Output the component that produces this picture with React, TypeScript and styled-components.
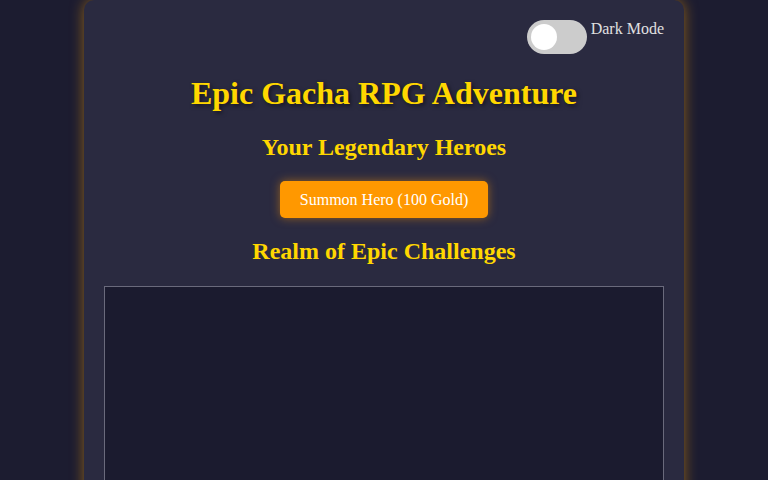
import React, { useState } from "react";
import styled, { createGlobalStyle } from "styled-components";

const GlobalStyle = createGlobalStyle`
  html, body {
    margin: 0;
    padding: 0;
    background: #1c1c30;
    font-family: "Liberation Serif", "Times New Roman", serif;
  }
`;

const Card = styled.div`
  width: 600px;
  box-sizing: border-box;
  margin: 0 auto;
  padding: 20px;
  background: #2a2a40;
  border-radius: 10px;
  box-shadow: 0 0 14px rgba(255, 165, 0, 0.5);
  text-align: center;
`;

const ToggleRow = styled.div`
  display: flex;
  justify-content: flex-end;
  align-items: flex-start;
  gap: 4px;
`;

const Switch = styled.button<{ $on: boolean }>`
  position: relative;
  width: 60px;
  height: 34px;
  border: none;
  padding: 0;
  border-radius: 34px;
  background: ${(p) => (p.$on ? "#ff9800" : "#cccccc")};
  cursor: pointer;

  &::before {
    content: "";
    position: absolute;
    left: 4px;
    top: 4px;
    width: 26px;
    height: 26px;
    border-radius: 50%;
    background: #ffffff;
    transform: translateX(${(p) => (p.$on ? "26px" : "0")});
    transition: transform 0.2s;
  }
`;

const ToggleLabel = styled.span`
  color: #e0e0e0;
  font-size: 16px;
  line-height: 18px;
`;

const Title = styled.h1`
  margin: 21.44px 0;
  font-size: 32px;
  font-weight: bold;
  color: #ffd700;
  text-shadow: 2px 2px 4px rgba(0, 0, 0, 0.5);
`;

const SectionTitle = styled.h2`
  margin: 19.92px 0;
  font-size: 24px;
  font-weight: bold;
  color: #ffd700;
`;

const SummonButton = styled.button`
  font-family: "Liberation Serif", "Times New Roman", serif;
  font-size: 16px;
  line-height: 17px;
  padding: 10px 20px;
  color: #ffffff;
  background: #ff9800;
  border: none;
  border-radius: 5px;
  box-shadow: 0 0 10px rgba(255, 152, 0, 0.5);
  cursor: pointer;
`;

const Arena = styled.div`
  width: 560px;
  height: 400px;
  margin-top: 21px;
  box-sizing: border-box;
  background: #1b1b2f;
  border: 1px solid #6a6a7c;
`;

export default function App() {
  const [dark, setDark] = useState(false);
  return (
    <>
      <GlobalStyle />
      <Card>
        <ToggleRow>
          <Switch $on={dark} onClick={() => setDark((d) => !d)} aria-label="Dark Mode" />
          <ToggleLabel>Dark Mode</ToggleLabel>
        </ToggleRow>
        <Title>Epic Gacha RPG Adventure</Title>
        <SectionTitle>Your Legendary Heroes</SectionTitle>
        <SummonButton>Summon Hero (100 Gold)</SummonButton>
        <SectionTitle>Realm of Epic Challenges</SectionTitle>
        <Arena />
      </Card>
    </>
  );
}
